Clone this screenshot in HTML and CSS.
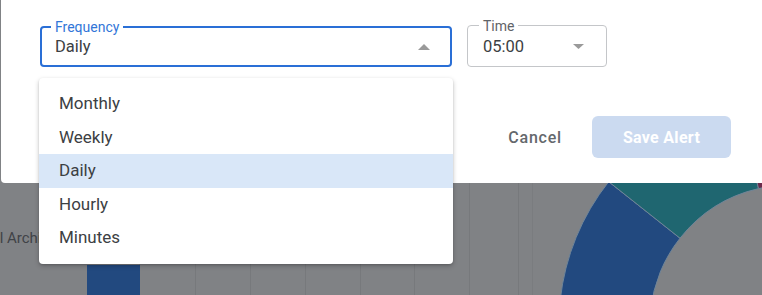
FILE: index.html
```html
<!DOCTYPE html>
<html lang="en">
<head>
<meta charset="utf-8">
<title>Save Alert</title>
<link rel="stylesheet" href="styles.css">
</head>
<body>
<div class="screen">
  <div class="chart">
    <div class="axis-col"><span class="axis-label">Digital Archive</span></div>
    <div class="col w53"><div class="bar"></div></div>
    <div class="col w56"></div>
    <div class="col w55"></div>
    <div class="col w55"></div>
    <div class="col w55"></div>
    <div class="col w54"></div>
    <div class="col w55"></div>
    <div class="col w49"></div>
    <div class="col w14"></div>
    <div class="donut-panel">
      <svg class="donut" width="229" height="295" viewBox="533 0 229 295">
        <path class="seg-blue" d="M608.7 181.7 A231 231 0 0 0 790 556 L790 465 A140 140 0 0 1 680 238.2 Z"/>
        <path class="seg-teal" d="M608.7 181.7 A231 231 0 0 1 738 100 L758.5 188.6 A140 140 0 0 0 680 238.2 Z"/>
        <path class="seg-maroon" d="M738 100 A231 231 0 0 1 905.5 125 L860 203.8 A140 140 0 0 0 758.5 188.6 Z"/>
      </svg>
    </div>
  </div>

  <div class="dialog">
    <div class="fields">
      <div class="field field-focused">
        <span class="field-label label-focused">Frequency</span>
        <span class="field-value">Daily</span>
        <svg class="arrow" width="12" height="6" viewBox="0 0 12 6"><polygon points="0,6 6,0 12,6"/></svg>
      </div>
      <div class="field field-time">
        <span class="field-label label-time">Time</span>
        <span class="field-value">05:00</span>
        <svg class="arrow" width="11" height="5" viewBox="0 0 11 5"><polygon points="0,0 11,0 5.5,5"/></svg>
      </div>
    </div>
    <div class="actions">
      <button class="btn-text">Cancel</button>
      <button class="btn-primary" disabled>Save Alert</button>
    </div>
  </div>

  <ul class="menu">
    <li class="menu-item">Monthly</li>
    <li class="menu-item">Weekly</li>
    <li class="menu-item is-selected">Daily</li>
    <li class="menu-item">Hourly</li>
    <li class="menu-item">Minutes</li>
  </ul>
</div>
</body>
</html>
```

FILE: styles.css
```css
html, body {
  margin: 0;
  padding: 0;
  overflow: hidden;
}

body {
  background: #808285;
  font-family: Roboto, "Noto Sans", sans-serif;
}

.screen {
  position: relative;
  width: 762px;
  height: 295px;
  overflow: hidden;
}

.chart {
  display: flex;
  height: 295px;
  background: #808285;
}

.axis-col {
  width: 87px;
  flex: none;
  display: flex;
  align-items: flex-start;
  padding-top: 230px;
  box-sizing: border-box;
  overflow: visible;
}

.axis-label {
  margin-left: -39px;
  white-space: nowrap;
  font-size: 15px;
  line-height: 17px;
  color: #404347;
}

.col {
  flex: none;
  box-sizing: border-box;
  border-right: 1px solid #77797c;
  display: flex;
  flex-direction: column;
  justify-content: flex-end;
}

.w53 { width: 53px; }
.w56 { width: 56px; }
.w55 { width: 55px; }
.w54 { width: 54px; }
.w49 { width: 49px; }
.w14 { width: 14px; border-right-color: #7a7c7f; }

.bar {
  height: 30px;
  background: #22497f;
  margin-right: -1px;
}

.donut-panel {
  flex: 1;
  overflow: hidden;
}

.donut {
  display: block;
}

.seg-blue { fill: #22497f; stroke: #6f8599; stroke-width: 1; }
.seg-teal { fill: #1f6670; stroke: #6f8599; stroke-width: 1; }
.seg-maroon { fill: #6b2a4a; stroke: #6f8599; stroke-width: 1; }

/* dialog */
.dialog {
  position: absolute;
  top: 0;
  left: 1px;
  width: 769px;
  height: 183px;
  box-sizing: border-box;
  padding: 25px 39px 25px;
  background: #ffffff;
  border-radius: 0 0 4px 4px;
  display: flex;
  flex-direction: column;
}

.fields {
  display: flex;
  align-items: flex-end;
  gap: 15px;
  height: 42px;
}

.field {
  position: relative;
  box-sizing: border-box;
  display: flex;
  align-items: center;
  justify-content: space-between;
  border-radius: 4px;
}

.field-focused {
  width: 412px;
  height: 41px;
  border: 2px solid #2a6fd6;
  padding: 0 20px 0 13px;
}

.field-time {
  width: 140px;
  height: 42px;
  border: 1px solid #c4c6c9;
  padding: 0 22px 0 15px;
}

.field-label {
  position: absolute;
  padding: 0 4px;
  background: #ffffff;
  font-size: 14px;
  line-height: 16px;
  white-space: nowrap;
}

.label-focused {
  top: -9px;
  left: 9px;
  color: #3276d8;
}

.label-time {
  top: -8px;
  left: 11px;
  color: #5f6368;
}

.field-value {
  font-size: 16.5px;
  line-height: 19px;
  color: #3c4043;
}

.arrow {
  display: block;
  fill: #9a9a9a;
}

.actions {
  margin-top: 49px;
  display: flex;
  justify-content: flex-end;
  align-items: center;
}

.btn-text {
  font-family: Roboto, "Noto Sans", sans-serif;
  font-weight: 500;
  font-size: 16px;
  letter-spacing: 0.8px;
  color: #64686c;
  background: transparent;
  border: none;
  padding: 0 14px;
  margin-right: 16px;
  height: 42px;
}

.btn-primary {
  font-family: Roboto, "Noto Sans", sans-serif;
  font-weight: 700;
  font-size: 16px;
  letter-spacing: 0.3px;
  color: #ffffff;
  background: #cbdaf0;
  border: none;
  border-radius: 6px;
  width: 139px;
  height: 42px;
  padding: 0;
}

/* dropdown menu */
.menu {
  position: absolute;
  top: 78px;
  left: 39px;
  width: 414px;
  margin: 0;
  padding: 9px 0;
  list-style: none;
  background: #ffffff;
  border-radius: 4px;
  box-shadow: 0 2px 5px rgba(0, 0, 0, 0.22), 0 1px 2px rgba(0, 0, 0, 0.12);
}

.menu-item {
  height: 33.5px;
  line-height: 33.5px;
  padding-left: 20px;
  font-size: 17px;
  color: #3c4043;
}

.menu-item.is-selected {
  background: #d9e7f8;
}
```
